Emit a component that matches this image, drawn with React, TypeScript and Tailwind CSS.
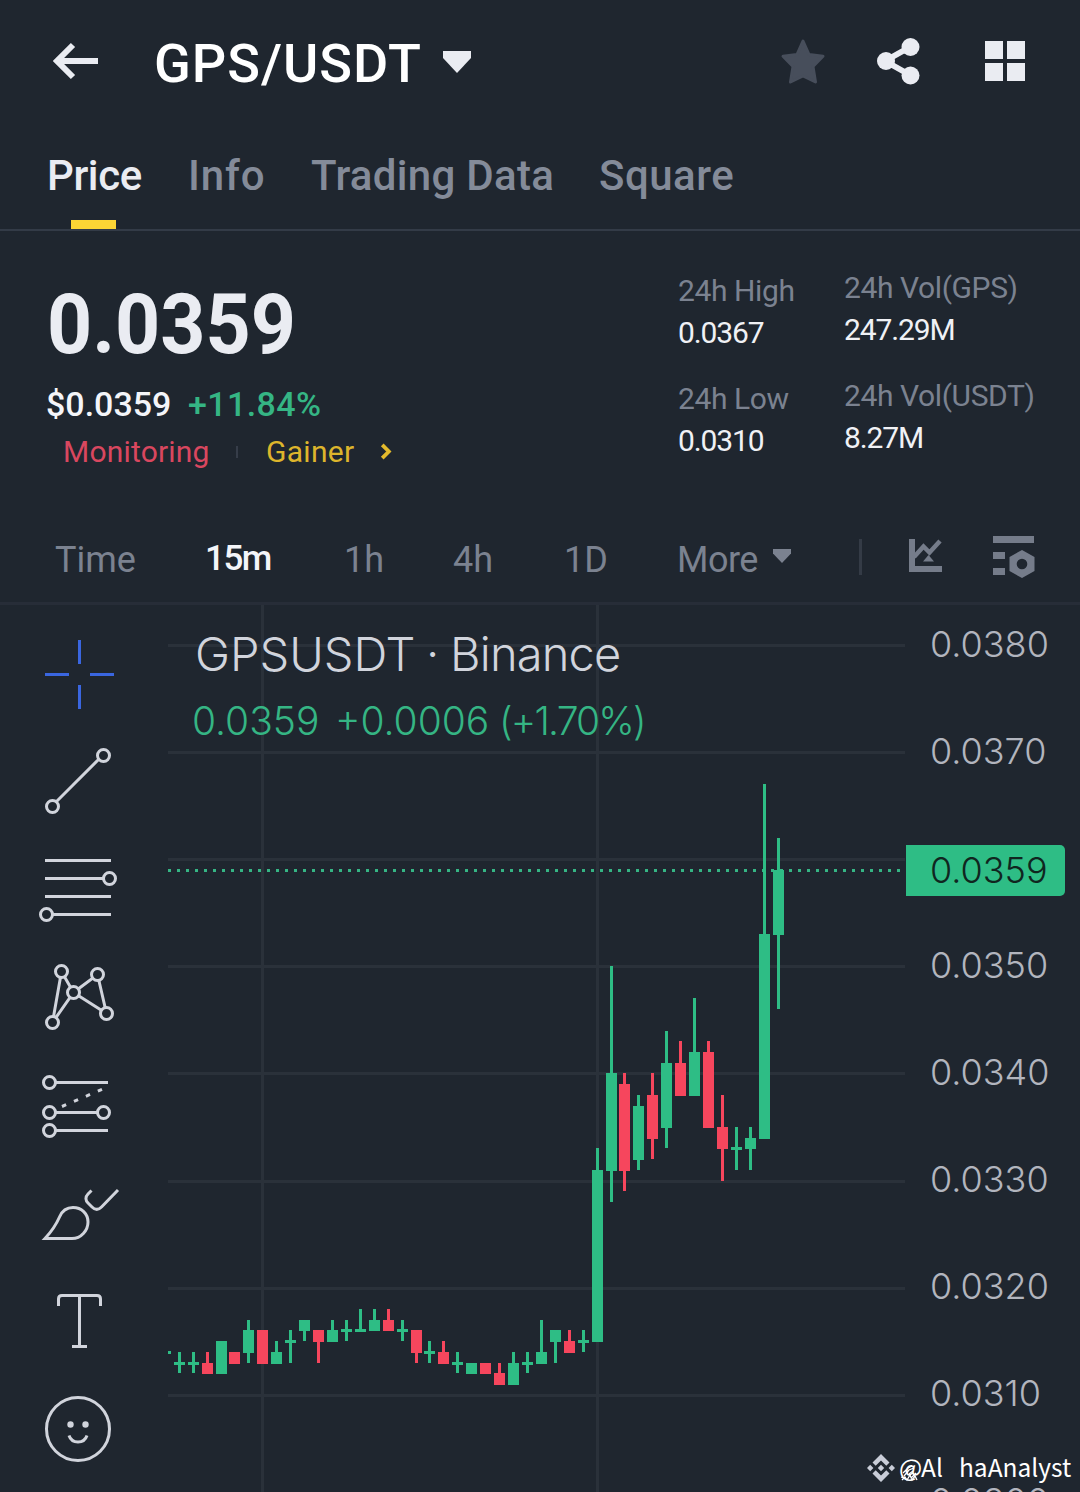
import { clsx } from 'clsx';

// [open, high, low, close] in ticks of 0.0001
const candles: [number, number, number, number][] = [
  [314, 314, 314, 314],
  [313, 314, 312, 313],
  [313, 314, 312, 313],
  [313, 314, 312, 312],
  [312, 315, 312, 315],
  [314, 314, 313, 313],
  [314, 317, 313, 316],
  [316, 316, 313, 313],
  [313, 315, 313, 314],
  [315, 316, 313, 315],
  [316, 317, 315, 317],
  [316, 316, 313, 315],
  [315, 317, 315, 316],
  [316, 317, 315, 316],
  [316, 318, 316, 316],
  [316, 318, 316, 317],
  [317, 318, 316, 316],
  [316, 317, 315, 316],
  [316, 316, 313, 314],
  [314, 315, 313, 314],
  [314, 315, 313, 313],
  [313, 314, 312, 313],
  [312, 313, 312, 313],
  [313, 313, 312, 312],
  [312, 313, 311, 311],
  [311, 314, 311, 313],
  [313, 314, 312, 313],
  [313, 317, 313, 314],
  [315, 316, 313, 316],
  [315, 316, 314, 314],
  [315, 316, 314, 315],
  [315, 333, 315, 331],
  [331, 350, 328, 340],
  [339, 340, 329, 331],
  [332, 338, 331, 337],
  [338, 340, 332, 334],
  [335, 344, 333, 341],
  [341, 343, 338, 338],
  [338, 347, 338, 342],
  [342, 343, 335, 335],
  [335, 338, 330, 333],
  [333, 335, 331, 333],
  [333, 335, 331, 334],
  [334, 367, 334, 353],
  [353, 362, 346, 359],
];

const CHART_W = 737;
const CHART_H = 887;
const STEP = 13.93;

const yOf = (tick: number) => Math.round(789.7 - (tick - 310) * 10.71);
const xOf = (i: number) => Math.round(-17.2 + i * STEP);

const gridTicks = [380, 370, 360, 350, 340, 330, 320, 310];
const axisLabels = ['0.0380', '0.0370', '', '0.0350', '0.0340', '0.0330', '0.0320', '0.0310', '0.0300'];

function Caret({ className }: { className?: string }) {
  return (
    <svg viewBox="0 0 28 22" className={className} fill="currentColor" preserveAspectRatio="none">
      <path d="M0 0h28v7L14 22 0 7z" />
    </svg>
  );
}

function Header() {
  return (
    <header className="flex h-[124px] items-center">
      <svg viewBox="0 0 46 38" className="ml-[52px] -mt-[3px] h-[38px] w-[46px]" fill="none" stroke="#eaecf2" strokeWidth="6">
        <path d="M46 19H5M21 3 5 19l16 16" />
      </svg>
      <h1 className="ml-[56px] mt-[3px] w-[289px] text-[54px] font-medium leading-none tracking-[1px] text-white">GPS/USDT</h1>
      <Caret className="h-[22px] w-[28px] text-[#eaecf2]" />
      <svg viewBox="0 0 46 48" className="ml-[309px] h-12 w-[46px]" fill="#474e5b" stroke="#474e5b" strokeWidth="3" strokeLinejoin="round">
        <path d="M23 3l6 13.500 14 1.800-10 10.200 2.500 15.500L23 38 10.500 44l2.500-15.500L3 18.300l14-1.800z" />
      </svg>
      <svg viewBox="0 0 44 48" className="-mt-0.5 ml-[50px] mr-px h-12 w-11" fill="#eaecf2">
        <path d="M9 24 34 10M9 24l25 14" stroke="#eaecf2" strokeWidth="6" />
        <circle cx="10" cy="24" r="9" />
        <circle cx="34.500" cy="10" r="9" />
        <circle cx="34.500" cy="38.500" r="9" />
      </svg>
      <div className="-mt-[3px] ml-16 grid grid-cols-2 gap-1">
        <span className="size-[18px] bg-[#eaecf2]" />
        <span className="size-[18px] bg-[#eaecf2]" />
        <span className="size-[18px] bg-[#eaecf2]" />
        <span className="size-[18px] bg-[#eaecf2]" />
      </div>
    </header>
  );
}

function Tabs() {
  return (
    <nav className="flex h-[107px] items-stretch border-b-2 border-[#333b47] pl-[47px] text-[42px] font-medium leading-[103px] text-[#848b99]">
      <span className="relative w-[141px] tracking-[-0.400px] text-[#eaecf2]">
        Price
        <span className="absolute bottom-0 left-6 h-[9px] w-[45px] bg-[#fcd535]" />
      </span>
      <span className="w-[123px] tracking-[0.900px]">Info</span>
      <span className="w-[288px] tracking-[0.300px]">Trading Data</span>
      <span className="tracking-[0.500px]">Square</span>
    </nav>
  );
}

function Stat({ label, value }: { label: string; value: string }) {
  return (
    <div className="mb-6 text-[30px] leading-[42px]">
      <div className="whitespace-nowrap tracking-[-0.400px] text-[#7b8290]">{label}</div>
      <div className="tracking-[-1.100px] text-[#f0f1f5]">{value}</div>
    </div>
  );
}

function Summary() {
  return (
    <section className="flex h-[286px]">
      <div className="w-[678px] pl-[47px] pt-[52px]">
        <div className="h-[84px] origin-left scale-x-[0.938] text-[84px] font-bold leading-[84px] text-[#eaecf2]">0.0359</div>
        <div className="mt-[17px] flex text-[34px] font-medium leading-10">
          <span className="-ml-px w-[142px] text-[#f4f5f9]">$0.0359</span>
          <span className="tracking-[0.400px] text-[#35b584]">+11.84%</span>
        </div>
        <div className="mt-[10px] flex items-center text-[30px] leading-9">
          <span className="ml-4 w-[173px] tracking-[0.200px] text-[#d9475f]">Monitoring</span>
          <span className="h-3 w-0.5 bg-[#363d49]" />
          <span className="ml-7 w-[114px] tracking-[0.300px] text-[#ddb52c]">Gainer</span>
          <svg viewBox="0 0 12 18" className="-mt-0.5 h-[17px] w-3" fill="none" stroke="#e3ba2c" strokeWidth="4">
            <path d="M2 2l7 7-7 7" />
          </svg>
        </div>
      </div>
      <div className="w-[166px] pt-[39px]">
        <Stat label="24h High" value="0.0367" />
        <Stat label="24h Low" value="0.0310" />
      </div>
      <div className="pt-9">
        <Stat label="24h Vol(GPS)" value="247.29M" />
        <Stat label="24h Vol(USDT)" value="8.27M" />
      </div>
    </section>
  );
}

function Intervals() {
  return (
    <div className="flex h-[88px] items-center border-b-[3px] border-[#272d38] pl-[55px] text-[36px] text-[#7b8290]">
      <span className="w-[150px]">Time</span>
      <span className="w-[139px] text-[35px] font-medium tracking-[-1.500px] text-[#f4f5f9]">15m</span>
      <span className="w-[109px]">1h</span>
      <span className="w-[111px]">4h</span>
      <span className="w-[113px]">1D</span>
      <span className="w-[96px] tracking-[-0.500px]">More</span>
      <Caret className="-mt-2 h-[14px] w-[18px]" />
      <span className="-mt-1.5 ml-[68px] h-[36px] w-[3px] bg-[#343b46]" />
      <svg viewBox="0 0 33 33" className="-mt-2 ml-[47px] size-[33px] shrink-0" fill="#757c8a">
        <path d="M0 0h6v27h27v6H0z" />
        <path d="M5 18l9.500-10.500 6 6L31 2" fill="none" stroke="#757c8a" strokeWidth="4.500" />
        <path d="M19.500 16l5.500 6.500H14z" />
      </svg>
      <svg viewBox="0 0 42 42" className="-mt-[5px] ml-[51px] size-[42px] shrink-0" fill="#757c8a">
        <path d="M0 0h41v7H0zM0 16h12v7H0zM0 32h12v7H0z" />
        <path fillRule="evenodd" d="M29 14l12.500 7v14L29 42l-12.500-7V21zm0 8.700a5.300 5.300 0 1 0 0 10.600 5.300 5.300 0 0 0 0-10.600z" />
      </svg>
    </div>
  );
}

const dot = (cx: number, cy: number) => <circle key={`${cx}-${cy}`} cx={cx} cy={cy} r="6" fill="#1f262f" />;

// Every drawing tool shares an 88px box
const tools = [
  <g stroke="#3a66e0">
    <path d="M43.500 10v24M43.500 55v24M9 44.500h24M54 44.500h24" />
  </g>,
  <g>
    <path d="M16 68 67 17" />
    {dot(16.5, 68.5)}
    {dot(67.5, 17.5)}
  </g>,
  <g>
    <path d="M9 14.500h66M9 32.500h66M9 50.500h66M9 68.500h66" />
    {dot(73.5, 32.5)}
    {dot(10.5, 68.5)}
  </g>,
  <g>
    <path d="M16.500 68.500 25.500 17.500 37.500 38.500 61.500 20.500 70.500 59.500 37.500 38.500z" />
    {dot(16.5, 68.5)}
    {dot(25.5, 17.5)}
    {dot(37.5, 38.5)}
    {dot(61.5, 20.5)}
    {dot(70.5, 59.5)}
  </g>,
  <g>
    <path d="M13.500 20.500H72M13.500 50.500h54M13.500 68.500H72" />
    <path d="M26 44.500 68 26.500" strokeDasharray="4.500 8.500" />
    {dot(13.5, 20.5)}
    {dot(13.5, 50.5)}
    {dot(67.5, 50.5)}
    {dot(13.5, 68.5)}
  </g>,
  <g>
    <path d="M9 68.500C16 61 20 55 23.500 47 26 41 30 37.500 37 37.500c8.500 0 15 6 15 14.500S45 68.500 36 68.500z" />
    <path d="M55.500 20.500 52 24c-3 3-2.500 6.500 0 9l4 4c3 3 6.500 3 9.500 0L82 20" />
  </g>,
  <g>
    <path d="M22.500 28v-7q0-3.500 3.500-3.500h35q3.500 0 3.500 3.500v7M43.500 18v50M36 68.500h15" />
  </g>,
  <g>
    <circle cx="42" cy="43" r="31.500" />
    <path d="M33 49.500c1.500 4.500 5 6.500 9 6.500s7.500-2 9-6.500" />
    <circle cx="34.500" cy="38.500" r="3.200" fill="#d1d4dc" stroke="none" />
    <circle cx="49.500" cy="38.500" r="3.200" fill="#d1d4dc" stroke="none" />
  </g>,
];

function Toolbar() {
  return (
    <div className="flex w-[168px] flex-col gap-5 pl-9 pt-[25px]">
      {tools.map((shape, i) => (
        <svg key={i} viewBox="0 0 88 88" className="size-[88px] shrink-0" fill="none" stroke="#d1d4dc" strokeWidth="3">
          {shape}
        </svg>
      ))}
    </div>
  );
}

function Candles() {
  return (
    <svg viewBox={`0 0 ${CHART_W} ${CHART_H}`} className="block h-[887px] w-[737px]" shapeRendering="crispEdges">
      {gridTicks.map((t) => (
        <rect key={t} x="0" y={yOf(t) - 1} width={CHART_W} height="3" fill="#2a313a" />
      ))}
      <rect x="93" y="0" width="3" height={CHART_H} fill="#2a313a" />
      <rect x="428" y="0" width="3" height={CHART_H} fill="#2a313a" />
      <path d={`M0 265.500H${CHART_W}`} stroke="#35b584" strokeWidth="3" strokeDasharray="3 6" />
      {candles.map(([open, high, low, close], i) => {
        const x = xOf(i);
        const top = yOf(Math.max(open, close));
        const bottom = yOf(Math.min(open, close));
        const flat = open === close;
        return (
          <g key={i} className={clsx(close >= open ? 'fill-[#2ebd85]' : 'fill-[#f6465d]')}>
            {high !== low && <rect x={x + 13} y={yOf(high)} width="3" height={yOf(low) - yOf(high)} />}
            <rect x={x + 9} y={flat ? top - 1 : top} width="11" height={flat ? 3 : bottom - top + 1} />
          </g>
        );
      })}
    </svg>
  );
}

function Watermark() {
  return (
    <div className="absolute left-[867px] top-[845px] flex font-['Noto_Sans_CJK_SC',sans-serif] text-[24.500px] font-normal leading-[34px] text-white">
      <svg viewBox="0 0 28 28" className="mr-1 mt-1 size-7" fill="#c9cdd8">
        <path d="M14 0l8.500 8.500-3.200 3.200L14 6.400l-5.300 5.300-3.200-3.200zM14 28l8.500-8.500-3.200-3.200-5.300 5.300-5.300-5.300-3.200 3.200zM14 10.800l3.200 3.200-3.200 3.200-3.200-3.200zM3.200 10.800L6.400 14l-3.200 3.200L0 14zM24.800 10.800L28 14l-3.200 3.200-3.200-3.200z" />
      </svg>
      <span className="relative w-[22px]">
        @
        <svg viewBox="0 0 20 20" className="absolute left-0 top-3 size-5" fill="none" stroke="#fff" strokeWidth="1.300">
          <path d="M4 11l5-5 4-2M5 14l5-6 5-2M3 18l3-3 2 3 3-5 2 5 3-4 2 4M10 12l4-3M2 15l3 1M12 16l5-5M7 9l2 2" />
        </svg>
      </span>
      <span className="w-[38px]">Al</span>
      <span>haAnalyst</span>
    </div>
  );
}

function Chart() {
  return (
    <section className="relative flex h-[887px] overflow-hidden font-['Inter',sans-serif] font-light">
      <Toolbar />
      <Candles />
      <div className="-mt-[15px] ml-[25px] flex flex-col text-[36px] text-[#b2b5be]">
        {axisLabels.map((label, i) => (
          <div key={i} className="flex h-[107.140px] shrink-0 items-center">{label}</div>
        ))}
      </div>
      <div className="absolute left-[195px] top-[20px] flex text-[47px] leading-[58px] text-[#d1d4dc]">
        <span className="w-[231px]">GPSUSDT</span>
        <span className="w-[24px]">·</span>
        <span className="tracking-[-0.800px]">Binance</span>
      </div>
      <div className="absolute left-[192px] top-[92px] flex text-[39px] leading-[48px] text-[#35b584]">
        <span className="w-[143px]">0.0359</span>
        <span className="w-[164px]">+0.0006</span>
        <span className="tracking-[-1.800px]">(+1.70%)</span>
      </div>
      <div className="absolute left-[906px] top-[240px] h-[51px] w-[159px] rounded-r-[5px] bg-[#2ebd85] pl-6 text-[36px] leading-[51px] text-[#10261f]">
        0.0359
      </div>
      <Watermark />
    </section>
  );
}

export default function App() {
  return (
    <main className="h-[1492px] w-[1080px] overflow-hidden bg-[#1f262f] font-['Roboto',sans-serif]">
      <Header />
      <Tabs />
      <Summary />
      <Intervals />
      <Chart />
    </main>
  );
}
